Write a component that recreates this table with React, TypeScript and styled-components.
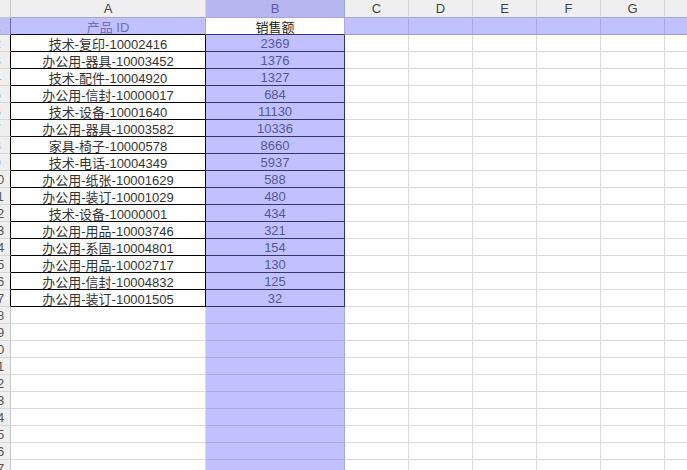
import React from "react";
import styled, { createGlobalStyle, css } from "styled-components";

const Global = createGlobalStyle`
  html, body { margin: 0; padding: 0; background: #ffffff; overflow: hidden; }
  body { font-family: "Liberation Sans", "Noto Sans CJK SC", sans-serif; }
`;

const Sheet = styled.div`
  display: grid;
  grid-template-columns: 11px 195px 139px 64px 64px 64px 64px 64px 64px;
  grid-template-rows: 18px repeat(27, 17px);
  width: 687px;
  height: 470px;
  overflow: hidden;
  font-size: 13px;
`;

const Corner = styled.div`
  box-sizing: border-box;
  background: #efefef;
  border-right: 1px solid #c8c8c8;
  border-bottom: 1px solid #c8c8c8;
`;

const ColHead = styled.div<{ $sel?: boolean }>`
  box-sizing: border-box;
  display: flex;
  align-items: center;
  justify-content: center;
  background: ${(p) => (p.$sel ? "#b6b6f0" : "#efefef")};
  color: ${(p) => (p.$sel ? "#5a5aa8" : "#444444")};
  border-right: 1px solid ${(p) => (p.$sel ? "#a4a4dc" : "#d4d4d4")};
  border-bottom: 1px solid #a6a6dc;
  line-height: 17px;
`;

const RowHead = styled.div<{ $sel?: boolean; $boxed?: boolean }>`
  box-sizing: border-box;
  overflow: hidden;
  background: ${(p) => (p.$sel ? "#c0c0f6" : "#efefef")};
  border-right: 1px solid
    ${(p) => (p.$boxed ? "#000000" : p.$sel ? "#6a6ab4" : "#c8c8c8")};
  border-bottom: 1px solid ${(p) => (p.$sel ? "#a6a6dc" : "#d6d6d6")};
  color: #555555;
`;

const RowNum = styled.div`
  width: 30px;
  margin-left: -18px;
  text-align: center;
  line-height: 17px;
`;

const Cell = styled.div<{
  $sel?: boolean;
  $active?: boolean;
  $boxed?: boolean;
  $bottomDark?: boolean;
  $head?: boolean;
}>`
  box-sizing: border-box;
  display: flex;
  align-items: center;
  justify-content: center;
  white-space: nowrap;
  overflow: hidden;
  padding-top: 1px;
  background: ${(p) => (p.$active ? "#ffffff" : p.$sel ? "#c1c1ff" : "#ffffff")};
  color: ${(p) =>
    p.$active ? "#222222" : p.$head ? "#6e6ec2" : p.$sel ? "#56569e" : "#333333"};
  border-right: 1px solid
    ${(p) => (p.$boxed ? (p.$sel ? "#34347c" : "#000000") : p.$sel ? "#a8a8e4" : "#dadada")};
  border-bottom: 1px solid
    ${(p) =>
      p.$boxed || p.$bottomDark
        ? p.$sel || p.$active
          ? "#34347c"
          : "#000000"
        : p.$sel
        ? "#a8a8e4"
        : "#dadada"};
  ${(p) =>
    p.$head &&
    !p.$active &&
    css`
      border-bottom-color: ${p.$bottomDark ? "#000000" : "#9a9ad8"};
    `}
`;

const COLS = ["A", "B", "C", "D", "E", "F", "G", ""];

const DATA: [string, string][] = [
  ["技术-复印-10002416", "2369"],
  ["办公用-器具-10003452", "1376"],
  ["技术-配件-10004920", "1327"],
  ["办公用-信封-10000017", "684"],
  ["技术-设备-10001640", "11130"],
  ["办公用-器具-10003582", "10336"],
  ["家具-椅子-10000578", "8660"],
  ["技术-电话-10004349", "5937"],
  ["办公用-纸张-10001629", "588"],
  ["办公用-装订-10001029", "480"],
  ["技术-设备-10000001", "434"],
  ["办公用-用品-10003746", "321"],
  ["办公用-系固-10004801", "154"],
  ["办公用-用品-10002717", "130"],
  ["办公用-信封-10004832", "125"],
  ["办公用-装订-10001505", "32"],
];

const TOTAL_ROWS = 27;

export default function App() {
  const rows: React.ReactNode[] = [];
  for (let r = 1; r <= TOTAL_ROWS; r++) {
    const isHeader = r === 1;
    const dataRow = r >= 2 && r <= 17 ? DATA[r - 2] : null;
    rows.push(
      <RowHead key={`rh${r}`} $sel={isHeader} $boxed={!!dataRow}>
        <RowNum>{r}</RowNum>
      </RowHead>
    );
    COLS.forEach((c, ci) => {
      const colB = ci === 1;
      const sel = isHeader || colB;
      const active = isHeader && colB;
      let text = "";
      if (isHeader && ci === 0) text = "产品 ID";
      if (isHeader && ci === 1) text = "销售额";
      if (dataRow && ci <= 1) text = dataRow[ci];
      rows.push(
        <Cell
          key={`c${ci}-${r}`}
          $sel={sel}
          $active={active}
          $head={isHeader}
          $boxed={!!dataRow && ci <= 1}
          $bottomDark={isHeader && ci <= 1}
        >
          {text}
        </Cell>
      );
    });
  }

  return (
    <>
      <Global />
      <Sheet>
        <Corner />
        {COLS.map((c, i) => (
          <ColHead key={`h${i}`} $sel={i === 1}>
            {c}
          </ColHead>
        ))}
        {rows}
      </Sheet>
    </>
  );
}
